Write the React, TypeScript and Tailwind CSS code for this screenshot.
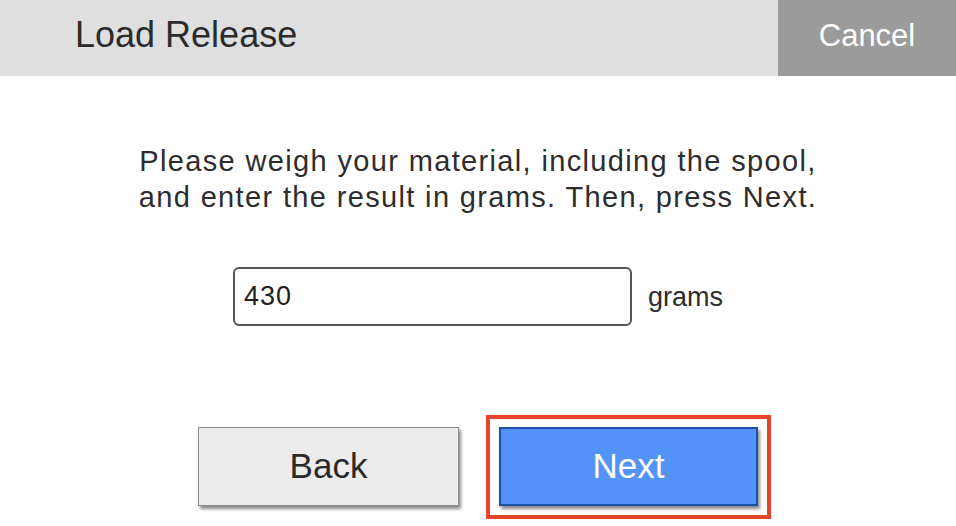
import React from "react";

export default function App() {
  return (
    <div
      className="w-[956px] h-[526px] bg-white overflow-hidden flex flex-col"
      style={{ fontFamily: '"Liberation Sans", Arial, Helvetica, sans-serif' }}
    >
      <header className="h-[76px] bg-[#dfdfdf] flex items-stretch shrink-0">
        <div className="flex-1 flex items-center pl-[75px] pb-[6px]">
          <h1 className="text-[36px] leading-none text-[#2b2b2b] font-normal">Load Release</h1>
        </div>
        <button className="w-[178px] bg-[#9b9b9b] flex items-center justify-center pb-[6px] text-white text-[31px] leading-none">
          Cancel
        </button>
      </header>

      <main className="flex flex-col items-center">
        <p className="mt-[67px] text-center text-[29px] leading-[36px] tracking-[1.35px] text-[#2d2d2d]">
          Please weigh your material, including the spool,
          <br />
          and enter the result in grams. Then, press Next.
        </p>

        <div className="mt-[52px] flex items-center gap-[16px]">
          <div className="w-[399px] h-[59px] border-2 border-[#555555] rounded-[6px] flex items-center pl-[9px] bg-white">
            <span className="text-[27px] tracking-[1px] text-[#222222] leading-none">430</span>
          </div>
          <span className="text-[27px] leading-none text-[#2d2d2d] pt-[2px]">grams</span>
        </div>

        <div className="mt-[101px] flex items-center gap-[40px]">
          <button className="w-[261px] h-[79px] bg-[#ececec] border border-[#8c8c8c] shadow-[2px_3px_3px_rgba(0,0,0,0.45)] flex items-center justify-center text-[35px] text-[#2a2a2a]">
            Back
          </button>
          <div className="relative">
            <div className="absolute -top-[12px] -left-[13px] -right-[13px] -bottom-[13px] border-[4px] border-[#e8432b] pointer-events-none" />
            <button className="relative w-[259px] h-[79px] bg-[#5393f7] border-2 border-[#1c4fa6] shadow-[2px_3px_3px_rgba(0,0,0,0.45)] flex items-center justify-center text-[35px] text-white">
              Next
            </button>
          </div>
        </div>
      </main>
    </div>
  );
}
